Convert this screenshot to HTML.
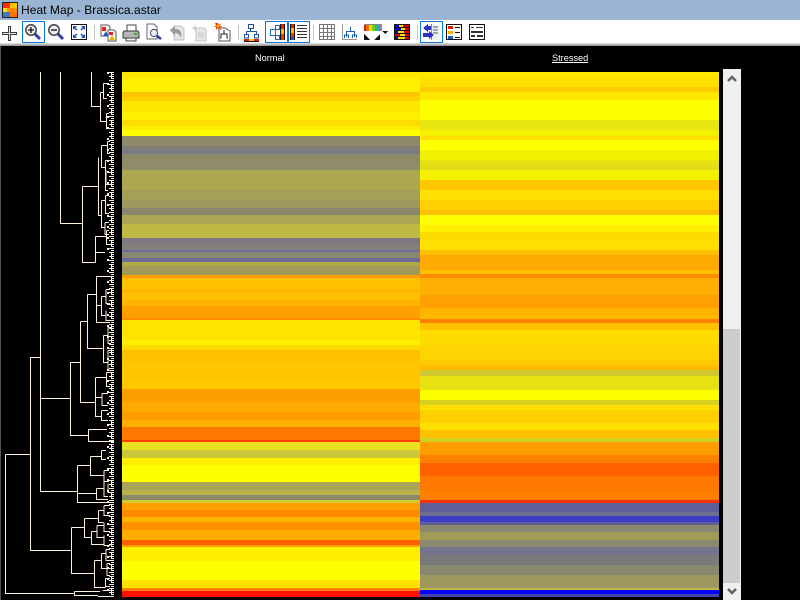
<!DOCTYPE html>
<html><head><meta charset="utf-8"><title>Heat Map - Brassica.astar</title>
<style>
html,body{margin:0;padding:0;background:#000;width:800px;height:600px;overflow:hidden;font-family:"Liberation Sans",sans-serif}
#title{position:absolute;left:0;top:0;width:800px;height:20px;background:#9ab5d3}
#title span{position:absolute;left:21px;top:2px;font-size:12px;line-height:16px;letter-spacing:.05px;color:#000;white-space:nowrap}
#tb{position:absolute;left:0;top:20px;width:800px;height:23px;background:#fff}
#ln{position:absolute;left:0;top:43px;width:800px;height:3px;background:linear-gradient(#e8e8e8,#8a8a8a)}
#edge{position:absolute;left:0;top:46px;width:1px;height:554px;background:#555}
.h{position:absolute;top:52px;font-size:9.2px;line-height:12px;color:#fff;white-space:nowrap}
#sb{position:absolute;left:723px;top:69px;width:18px;height:531px;background:#f0f0f0}
#th{position:absolute;left:0;top:260px;width:17px;height:254px;background:#cdcdcd}
svg{position:absolute;left:0;top:0}
</style></head><body>
<div id="title"><span>Heat Map - Brassica.astar</span></div>
<div id="tb"></div><div id="ln"></div><div id="edge"></div>
<svg width="800" height="46" viewBox="0 0 800 46" shape-rendering="crispEdges">
<!-- app icon -->
<rect x="2" y="2" width="16" height="16" fill="#222"/><rect x="3" y="3" width="7" height="5" fill="#ff2a00"/><rect x="10" y="3" width="7" height="5" fill="#ffc800"/><rect x="3" y="8" width="4" height="4" fill="#ffe000"/><rect x="7" y="8" width="10" height="4" fill="#ff8c00"/><rect x="3" y="12" width="7" height="5" fill="#3a7ad0"/><rect x="10" y="12" width="7" height="5" fill="#ff7000"/>
<!-- selected boxes -->
<g fill="none" stroke="#0a78d7"><rect x="22.5" y="21.5" width="22" height="21"/><rect x="265.5" y="21.5" width="22" height="21"/><rect x="288.5" y="21.500" width="21" height="21"/><rect x="420.5" y="21.5" width="22" height="21"/></g>
<!-- separators -->
<g fill="#c4c4c4"><rect x="94" y="25" width="1" height="15"/><rect x="238" y="25" width="1" height="15"/><rect x="313" y="25" width="1" height="15"/><rect x="417" y="25" width="1" height="15"/></g>
<!-- plus -->
<path d="M8.500 26.500h2v6h6v2h-6v6h-2v-6h-6v-2h6z" fill="#e4e4e4" stroke="#3c3c3c" stroke-width="1"/>
</svg>
<svg width="800" height="46" viewBox="0 0 800 46">
<!-- zoom in -->
<circle cx="31" cy="30" r="5.200" fill="#e8eef5" stroke="#444" stroke-width="1.500"/><path d="M28 30h6M31 27v6" stroke="#111" stroke-width="1.300"/><path d="M35 34l5 5" stroke="#3a3ab0" stroke-width="3"/>
<!-- zoom out -->
<circle cx="54" cy="30" r="5.200" fill="#e8eef5" stroke="#444" stroke-width="1.500"/><path d="M51 30h6" stroke="#111" stroke-width="1.300"/><path d="M58 34l5 5" stroke="#3a3ab0" stroke-width="3"/>
<!-- fit -->
<rect x="71.500" y="24.500" width="15" height="15" fill="#fff" stroke="#111"/><path d="M74 27l3 3M84 27l-3 3M74 37l3-3M84 37l-3-3" stroke="#1a50c0" stroke-width="1.500"/><path d="M73 26h4l-4 4zM85 26h-4l4 4zM73 38h4l-4-4zM85 38h-4l4-4z" fill="#1a50c0"/>
<!-- copy -->
<path d="M101 25h7l2 2v9h-9z" fill="#fff" stroke="#555"/><rect x="102" y="27" width="4" height="4" fill="#e82020"/><path d="M103 36l3-5 2 5z" fill="#2050d0"/><path d="M108 30h6l2 2v9h-8z" fill="#fff" stroke="#555"/><rect x="109" y="32" width="4" height="3" fill="#e82020"/><path d="M109 40l3-5 3 5z" fill="#f0b000"/>
<!-- print -->
<path d="M127 25h9v6h-9z" fill="#fff" stroke="#444"/><path d="M124 31h14l1 2v5h-16v-5z" fill="#b4b4ba" stroke="#333"/><path d="M126 38h10v3h-10z" fill="#eee" stroke="#444"/><rect x="134" y="33" width="3" height="2" fill="#30b030"/>
<!-- preview -->
<path d="M147 24h7l3 3v12h-10z" fill="#fff" stroke="#667"/><circle cx="154" cy="33" r="3.600" fill="#dfeeff" stroke="#445"/><path d="M157 36l4 3" stroke="#2a3ab0" stroke-width="2.600"/>
<!-- undo (disabled) -->
<path d="M174 26h7l3 3v11h-10z" fill="#e6e6e6" stroke="#c0c0c0"/><path d="M170 30l5-4v3c5 0 7 3 6 9-1-3-3-5-6-5v3z" fill="#9a9a9a"/>
<!-- new (disabled) -->
<path d="M196 28h8l2 2v11h-10z" fill="#e8e8e8" stroke="#c4c4c4"/><path d="M198 33h6M198 35h6M198 37h6" stroke="#c8c8c8"/><path d="M195 24l1 3 3 1-3 1-1 3-1-3-3-1 3-1z" fill="#c8d0d0"/>
<!-- new tree -->
<path d="M219 28h6l5 3v10h-11z" fill="#fff" stroke="#555"/><path d="M224 30v4M221 38v-4h6v4M221 38h-1M227 38h1" stroke="#222" fill="none"/><path d="M218 23l1 2 2-2-1 3 3 0-3 1 1 3-3-2-2 2 0-3-3 0 3-1-1-3z" fill="#f04000"/><circle cx="218" cy="26" r="1.300" fill="#ffd000"/>
</svg>
<svg width="800" height="46" viewBox="0 0 800 46" shape-rendering="crispEdges">
<!-- tree heat 1 -->
<path d="M248.500 24.500h5v4h-5zM250.500 28.500v3M246.500 35v-3.500h10v3.500" fill="none" stroke="#1a50a8"/><rect x="244.500" y="34.500" width="4" height="3.500" fill="none" stroke="#1a50a8"/><rect x="254.500" y="34.500" width="4" height="3.500" fill="none" stroke="#1a50a8"/><rect x="244" y="39" width="5" height="2" fill="#e02000"/><rect x="249" y="39" width="5" height="2" fill="#ffd800"/><rect x="254" y="39" width="5" height="2" fill="#e02000"/><rect x="244" y="41" width="15" height="1" fill="#111"/>
<!-- tree heat 2 -->
<path d="M270.500 29.500h5v6h-5zM275.500 25.500h4v4h-4zM275.500 35.500h4v4h-4z" fill="none" stroke="#1a70c0"/><rect x="280" y="24" width="1" height="16" fill="#111"/><rect x="281" y="24" width="3" height="5" fill="#e02000"/><rect x="281" y="29" width="3" height="5" fill="#ffc000"/><rect x="281" y="34" width="3" height="6" fill="#e04000"/><rect x="284" y="24" width="1" height="16" fill="#111"/>
<!-- list heat -->
<rect x="290" y="24" width="1" height="16" fill="#111"/><rect x="291" y="24" width="3" height="4" fill="#e02000"/><rect x="291" y="28" width="3" height="5" fill="#ffc000"/><rect x="291" y="33" width="3" height="4" fill="#e04000"/><rect x="291" y="37" width="3" height="3" fill="#2060c0"/><rect x="294" y="24" width="1" height="16" fill="#111"/><g fill="#333"><rect x="297" y="25" width="10" height="1"/><rect x="297" y="28" width="10" height="1"/><rect x="297" y="31" width="10" height="1"/><rect x="297" y="34" width="10" height="1"/><rect x="297" y="37" width="10" height="1"/></g>
<!-- grid -->
<path d="M319.500 24.500h15v15h-15zM319.500 28.500h15M319.500 32.500h15M319.500 36.500h15M323.500 24.500v15M327.500 24.500v15M331.500 24.500v15" fill="none" stroke="#777"/>
<!-- tree axis -->
<path d="M342.500 24.500v15h15" fill="none" stroke="#333" stroke-dasharray="1 1"/><path d="M350.500 26.500v5M346.500 37v-5.500h8v5.500M344.500 38v-3h4v3M352.500 38v-3h4v3" fill="none" stroke="#1a60b0"/>
<!-- colour gradient -->
<rect x="364" y="25" width="2" height="6" fill="#d02020"/><rect x="366" y="25" width="3" height="6" fill="#f07000"/><rect x="369" y="25" width="3" height="6" fill="#f0e000"/><rect x="372" y="25" width="3" height="6" fill="#70d020"/><rect x="375" y="25" width="3" height="6" fill="#30c060"/><rect x="378" y="25" width="2" height="6" fill="#30a0d0"/><rect x="380" y="25" width="2" height="6" fill="#a080d0"/><rect x="364" y="24" width="18" height="1" fill="#888"/>
<path d="M364 34l6 6h-6zM380 34l-6 6h6z" fill="#111"/><path d="M382 31h6l-3 3z" fill="#111"/>
<!-- colormap -->
<rect x="394" y="24" width="16" height="16" fill="#111"/><g><rect x="395" y="25" width="4" height="2" fill="#0000e0"/><rect x="399" y="25" width="4" height="2" fill="#ffe000"/><rect x="403" y="25" width="6" height="2" fill="#e00000"/><rect x="395" y="28" width="6" height="2" fill="#0000e0"/><rect x="401" y="28" width="4" height="2" fill="#ffe000"/><rect x="405" y="28" width="4" height="2" fill="#e00000"/><rect x="395" y="31" width="3" height="2" fill="#0000e0"/><rect x="398" y="31" width="6" height="2" fill="#ffe000"/><rect x="404" y="31" width="5" height="2" fill="#e00000"/><rect x="395" y="34" width="5" height="2" fill="#e00000"/><rect x="400" y="34" width="5" height="2" fill="#ffe000"/><rect x="405" y="34" width="4" height="2" fill="#e00000"/><rect x="395" y="37" width="3" height="2" fill="#0000e0"/><rect x="398" y="37" width="7" height="2" fill="#ffe000"/><rect x="405" y="37" width="4" height="2" fill="#e00000"/></g>
<!-- swap -->
<rect x="431" y="24" width="1" height="16" fill="#888"/><rect x="432" y="24" width="8" height="16" fill="#eef3f8"/><path d="M433 27h5M433 30h5M433 33h5" stroke="#555"/><path d="M423 28l5-4v2h3v4h-3v2z" fill="#3030c0"/><path d="M434 35l-5-4v2h-6v4h6v2z" fill="#3030c0"/>
<!-- legend -->
<rect x="446.500" y="24.500" width="15" height="15" fill="#fff" stroke="#111"/><rect x="448" y="26" width="5" height="3" fill="#e82000"/><rect x="448" y="31" width="5" height="3" fill="#f8b000"/><rect x="448" y="36" width="5" height="3" fill="#1a60b8"/><path d="M455 27.500h5M455 32.500h5M455 37.500h5" stroke="#111"/>
<!-- table -->
<rect x="469.500" y="24.500" width="15" height="15" fill="#fff" stroke="#111"/><path d="M471 27.500h3M476 27.500h7M471 31.500h12M471 32.500h12M471 35.500h4M477 35.500h6M471 36.500h4M477 36.500h6" stroke="#333"/>
</svg>
<div class="h" style="left:255px">Normal</div>
<div class="h" style="left:552px;text-decoration:underline">Stressed</div>
<svg width="800" height="600" viewBox="0 0 800 600" shape-rendering="crispEdges">
<!-- Normal column -->
<g>
<rect x="122" y="72" width="298" height="6" fill="#ffe800"/><rect x="122" y="78" width="298" height="14" fill="#fff000"/><rect x="122" y="92" width="298" height="4" fill="#ffc400"/><rect x="122" y="96" width="298" height="5" fill="#ffd000"/><rect x="122" y="101" width="298" height="11" fill="#ffe800"/><rect x="122" y="112" width="298" height="8" fill="#fff000"/><rect x="122" y="120" width="298" height="6" fill="#ffdc00"/><rect x="122" y="126" width="298" height="4" fill="#ffee00"/><rect x="122" y="130" width="298" height="6" fill="#ffff00"/>
<rect x="122" y="136" width="298" height="10" fill="#8c8a68"/><rect x="122" y="146" width="298" height="4" fill="#807e78"/><rect x="122" y="150" width="298" height="4" fill="#7a7a84"/><rect x="122" y="154" width="298" height="8" fill="#8c8a68"/><rect x="122" y="162" width="298" height="8" fill="#8f8c68"/><rect x="122" y="170" width="298" height="20" fill="#aca850"/><rect x="122" y="190" width="298" height="10" fill="#a5a058"/><rect x="122" y="200" width="298" height="8" fill="#9c9860"/><rect x="122" y="208" width="298" height="7" fill="#8a886c"/><rect x="122" y="215" width="298" height="9" fill="#aaa652"/><rect x="122" y="224" width="298" height="14" fill="#bdb944"/>
<rect x="122" y="238" width="298" height="6" fill="#7c7a80"/><rect x="122" y="244" width="298" height="6" fill="#828078"/><rect x="122" y="250" width="298" height="2" fill="#6c6ca0"/><rect x="122" y="252" width="298" height="6" fill="#888870"/><rect x="122" y="258" width="298" height="4" fill="#6c6c98"/><rect x="122" y="262" width="298" height="4" fill="#aea848"/><rect x="122" y="266" width="298" height="9" fill="#a09a58"/>
<rect x="122" y="275" width="298" height="3" fill="#ff9c00"/><rect x="122" y="278" width="298" height="12" fill="#ffc000"/><rect x="122" y="290" width="298" height="2" fill="#ffb000"/><rect x="122" y="292" width="298" height="8" fill="#ffc000"/><rect x="122" y="300" width="298" height="6" fill="#ffb400"/><rect x="122" y="306" width="298" height="12" fill="#ffa000"/><rect x="122" y="318" width="298" height="2" fill="#ff8c00"/><rect x="122" y="320" width="298" height="20" fill="#ffe400"/><rect x="122" y="340" width="298" height="5" fill="#fff000"/><rect x="122" y="345" width="298" height="5" fill="#ffdc00"/><rect x="122" y="350" width="298" height="12" fill="#ffc000"/><rect x="122" y="362" width="298" height="18" fill="#ffc600"/><rect x="122" y="380" width="298" height="9" fill="#ffc800"/><rect x="122" y="389" width="298" height="13" fill="#ff9e00"/><rect x="122" y="402" width="298" height="10" fill="#ffaa00"/><rect x="122" y="412" width="298" height="8" fill="#ff9c00"/><rect x="122" y="420" width="298" height="7" fill="#ffb000"/><rect x="122" y="427" width="298" height="13" fill="#ff7800"/><rect x="122" y="440" width="298" height="2" fill="#ff4000"/>
<rect x="122" y="442" width="298" height="8" fill="#e8e020"/><rect x="122" y="450" width="298" height="8" fill="#ccc83c"/><rect x="122" y="458" width="298" height="7" fill="#ffee00"/><rect x="122" y="465" width="298" height="17" fill="#ffff00"/><rect x="122" y="482" width="298" height="8" fill="#a8a458"/><rect x="122" y="490" width="298" height="5" fill="#b8b448"/><rect x="122" y="495" width="298" height="5" fill="#8a8868"/><rect x="122" y="500" width="298" height="3" fill="#d0cc30"/>
<rect x="122" y="503" width="298" height="7" fill="#ffa000"/><rect x="122" y="510" width="298" height="7" fill="#ff8a00"/><rect x="122" y="517" width="298" height="5" fill="#ffb400"/><rect x="122" y="522" width="298" height="8" fill="#ff9000"/><rect x="122" y="530" width="298" height="10" fill="#ffac00"/><rect x="122" y="540" width="298" height="5" fill="#ff6000"/><rect x="122" y="545" width="298" height="2" fill="#ffa000"/><rect x="122" y="547" width="298" height="14" fill="#ffee00"/><rect x="122" y="561" width="298" height="19" fill="#ffff00"/><rect x="122" y="580" width="298" height="8" fill="#ffe000"/><rect x="122" y="588" width="298" height="3" fill="#ff8000"/><rect x="122" y="591" width="298" height="6" fill="#ff1000"/>
</g>
<!-- Stressed column -->
<g>
<rect x="420" y="72" width="299" height="5" fill="#ffe800"/><rect x="420" y="77" width="299" height="10" fill="#ffe000"/><rect x="420" y="87" width="299" height="5" fill="#ffcc00"/><rect x="420" y="92" width="299" height="8" fill="#ffe800"/><rect x="420" y="100" width="299" height="20" fill="#ffff00"/><rect x="420" y="120" width="299" height="10" fill="#e8e810"/><rect x="420" y="130" width="299" height="6" fill="#f4f000"/><rect x="420" y="136" width="299" height="4" fill="#ffe000"/><rect x="420" y="140" width="299" height="10" fill="#ffff00"/><rect x="420" y="150" width="299" height="10" fill="#f0f000"/><rect x="420" y="160" width="299" height="6" fill="#e8e010"/><rect x="420" y="166" width="299" height="4" fill="#e0dc18"/><rect x="420" y="170" width="299" height="10" fill="#f4f000"/><rect x="420" y="180" width="299" height="10" fill="#ffc800"/><rect x="420" y="190" width="299" height="10" fill="#ffe000"/><rect x="420" y="200" width="299" height="10" fill="#ffd000"/><rect x="420" y="210" width="299" height="5" fill="#ffc000"/><rect x="420" y="215" width="299" height="10" fill="#ffff00"/><rect x="420" y="225" width="299" height="7" fill="#fff000"/><rect x="420" y="232" width="299" height="8" fill="#ffdc00"/>
<rect x="420" y="240" width="299" height="10" fill="#ffe000"/><rect x="420" y="250" width="299" height="5" fill="#ffc000"/><rect x="420" y="255" width="299" height="15" fill="#ffaa00"/><rect x="420" y="270" width="299" height="4" fill="#ffc000"/><rect x="420" y="274" width="299" height="4" fill="#ff8c00"/><rect x="420" y="278" width="299" height="17" fill="#ffb000"/><rect x="420" y="295" width="299" height="13" fill="#ffa000"/><rect x="420" y="308" width="299" height="7" fill="#ffb400"/><rect x="420" y="315" width="299" height="4" fill="#ffb800"/><rect x="420" y="319" width="299" height="4" fill="#ff8000"/><rect x="420" y="323" width="299" height="7" fill="#ffc000"/><rect x="420" y="330" width="299" height="15" fill="#ffdc00"/><rect x="420" y="345" width="299" height="15" fill="#ffd400"/><rect x="420" y="360" width="299" height="5" fill="#ffc800"/><rect x="420" y="365" width="299" height="5" fill="#ffbc00"/><rect x="420" y="370" width="299" height="6" fill="#d0c830"/><rect x="420" y="376" width="299" height="14" fill="#e8e010"/><rect x="420" y="390" width="299" height="10" fill="#ffff00"/><rect x="420" y="400" width="299" height="5" fill="#d8d020"/><rect x="420" y="405" width="299" height="5" fill="#ffe000"/><rect x="420" y="410" width="299" height="13" fill="#ffd000"/>
<rect x="420" y="423" width="299" height="7" fill="#ffe000"/><rect x="420" y="430" width="299" height="8" fill="#ffc000"/><rect x="420" y="438" width="299" height="4" fill="#d0d020"/><rect x="420" y="442" width="299" height="13" fill="#ff9c00"/><rect x="420" y="455" width="299" height="8" fill="#ff8000"/><rect x="420" y="463" width="299" height="13" fill="#ff6000"/><rect x="420" y="476" width="299" height="14" fill="#ff7800"/><rect x="420" y="490" width="299" height="10" fill="#ff8000"/><rect x="420" y="500" width="299" height="3" fill="#ff3000"/>
<rect x="420" y="503" width="299" height="9" fill="#5e5e98"/><rect x="420" y="512" width="299" height="4" fill="#707090"/><rect x="420" y="516" width="299" height="6" fill="#3c3cc8"/><rect x="420" y="522" width="299" height="3" fill="#606098"/><rect x="420" y="525" width="299" height="7" fill="#8a8870"/><rect x="420" y="532" width="299" height="8" fill="#a09c58"/><rect x="420" y="540" width="299" height="7" fill="#8a8a70"/><rect x="420" y="547" width="299" height="8" fill="#74748c"/><rect x="420" y="555" width="299" height="10" fill="#7a7a7c"/><rect x="420" y="565" width="299" height="10" fill="#888870"/><rect x="420" y="575" width="299" height="13" fill="#9c9860"/><rect x="420" y="588" width="299" height="2" fill="#c0b840"/><rect x="420" y="590" width="299" height="4" fill="#0000ff"/><rect x="420" y="594" width="299" height="3" fill="#4444b0"/>
</g>
<!-- Dendrogram -->
<g fill="none" stroke="#fdf0dc" stroke-width="1">
<!-- trunk levels -->
<path d="M40.500 72V491.500H77.500M60.500 72V223.500H82.500M82.500 186.500V262.500H95.500M82.500 186.500H98.500M98.500 157.500V215.500H101.500M91.500 72V106.500H100.500M100.500 92.500V121.500H106.500M100.500 92.500H103.500M30.500 357.500V550.500H71.500M30.500 357.500H40.500M40.500 398.500H70.500M70.500 362.500V435.500H88.500M70.500 362.500H80.500M80.500 321.500V402.500H95.500M80.500 321.500H87.500M87.500 294.500V348.500H103.500M87.500 294.500H96.500M96.500 276.500V322.500H110M96.500 276.500H110M96.500 305.500H101.500M95.500 377.500V416.500H101.500M95.500 377.500H106.500M88.500 429.500V441.500H114M88.500 429.500H107M5.500 454.500V593.500H74.500M5.500 454.500H30.500M71.500 527.500V573.500H94.500M71.500 527.500H84.500M84.500 518.500V537.500H91.500M84.500 518.500H98.500M98.500 510.500V522.500H103.500M98.500 510.500H104M91.500 531.500V544.500H104M91.500 531.500H97M77.500 465.500V502.500H114M77.500 465.500H90.500M90.500 456.500V475.500H104M90.500 456.500H101.500M77.500 493.500H96.500M96.500 488.500V499.500H108M96.500 488.500H104M94.500 560.500V587.500H105.500M94.500 560.500H101.500M101.500 553.500V568.500H107M101.500 553.500H106M74.500 591.500V595.500H98M74.500 591.500H100M103 590.500H114M98 596.500H114"/>
<!-- mid levels -->
<path d="M95.500 236.500V262.500M95.500 236.500H106.500M106.500 230.500V244.500H109M106.500 230.500H109M95.500 252.500H105M103.500 83.500V98.500H107M103.500 83.500H107M106.500 113.500V128.500H109M106.500 113.500H109M101.500 145.500V167.500H105.500M101.500 145.500H107.500M107.500 141.500V153.500H110M107.500 141.500H110M105.500 160.500V190.500H108M105.500 160.500H109M101.500 200.500V227.500H105M101.500 200.500H105.500M105.500 195.500V213.500H109M105.500 195.500H109M105 222.500V234.500H109M105 222.500H109M106 170.500V184.500H110"/>
<path d="M101.500 296.500V315.500H106M101.500 296.500H106M106 289.500V303.500H110M106 289.500H110M106 310.500V320.500H110M103.500 335.500V362.500H108M103.500 335.500H108M108 327.500V343.500H111M108 327.500H111M108 350.500V370.500H111M108 350.500H111M106.500 372.500V386.500H110M106.500 372.500H110M101.500 410.500V420.500H108M101.500 410.500H108M102 393.500V405.500H108M102 393.500H108M95.500 397.500H102"/>
<path d="M101.500 450.500V459.500H106M101.500 450.500H106M104 470.500V481.500H109M104 470.500H109M104 480.500V496.500H108M108 483.500V492.500H111M104 505.500V515.500H110M104 505.500H110M97 525.500V537.500H104M97 525.500H104M104 522.500V531.500H110M104 535.500V545.500H110M106 549.500V560.500H110M106 549.500H110M107 563.500V575.500H110M107 563.500H110M105.500 578.500V586.500H110M105.500 578.500H110"/>
<!-- leaf comb, staggered -->
<path d="M112.500 72V597" stroke-width="3" stroke-dasharray="1 1"/>
<path d="M110 72V597" stroke-width="2" stroke-dasharray="1 3"/>
<path d="M108 72V597" stroke-width="2" stroke-dasharray="2 9"/>
<!-- short stems on the comb -->
<path d="M111.500 72V596" stroke-dasharray="6 6"/>
</g>
</svg>
<div id="sb"><div id="th"></div></div>
<svg width="800" height="600" viewBox="0 0 800 600">
<path d="M728 81l4-4 4 4" fill="none" stroke="#606060" stroke-width="2.400"/>
<path d="M728 589l4 4 4-4" fill="none" stroke="#606060" stroke-width="2.400"/>
</svg>
</body></html>
